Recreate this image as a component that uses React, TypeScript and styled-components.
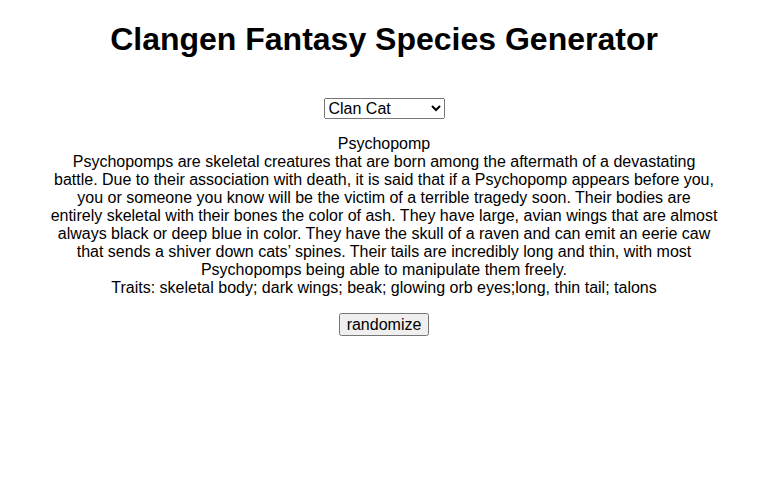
import { useState } from "react";
import styled, { createGlobalStyle } from "styled-components";

const GlobalStyle = createGlobalStyle`
  body {
    margin: 0;
    background: #ffffff;
    color: #000000;
    font-family: "Liberation Sans", Arial, sans-serif;
  }
`;

const species: any = {
  "Clan Cat": {
    name: "Psychopomp",
    description:
      "Psychopomps are skeletal creatures that are born among the aftermath of a devastating battle. Due to their association with death, it is said that if a Psychopomp appears before you, you or someone you know will be the victim of a terrible tragedy soon. Their bodies are entirely skeletal with their bones the color of ash. They have large, avian wings that are almost always black or deep blue in color. They have the skull of a raven and can emit an eerie caw that sends a shiver down cats\u2019 spines. Their tails are incredibly long and thin, with most Psychopomps being able to manipulate them freely.",
    traits: "skeletal body; dark wings; beak; glowing orb eyes;long, thin tail; talons",
  },
};

const App = () => {
  const [kind, setKind] = useState("Clan Cat");
  const [seed, setSeed] = useState(0);
  const current = species[kind] || species["Clan Cat"];

  return (
    <Container>
      <GlobalStyle />
      <h1>Clangen Fantasy Species Generator</h1>
      <select
        className="picker"
        value={kind}
        onChange={(e) => setKind(e.target.value)}
      >
        <option>Clan Cat</option>
        <option>Loner</option>
        <option>Rogue</option>
        <option>Kittypet</option>
      </select>
      <div className="result" data-seed={seed}>
        <div>{current.name}</div>
        <div>{current.description}</div>
        <div>Traits: {current.traits}</div>
      </div>
      <button className="btn" onClick={() => setSeed(seed + 1)}>
        randomize
      </button>
    </Container>
  );
};

const Container = styled.div`
  display: flex;
  flex-direction: column;
  align-items: center;
  text-align: center;
  h1 {
    font-size: 32px;
    font-weight: bold;
    margin: 21px 0 40px;
    line-height: 37px;
  }
  .picker {
    font-family: "Liberation Sans", Arial, sans-serif;
    font-size: 16px;
    width: 121px;
    height: 21px;
  }
  .result {
    margin-top: 16px;
    width: 667px;
    font-size: 16px;
    line-height: 18px;
  }
  .btn {
    margin-top: 16px;
    font-family: "Liberation Sans", Arial, sans-serif;
    font-size: 16px;
    height: 23px;
    padding: 1px 6px;
  }
`;

export default App;
